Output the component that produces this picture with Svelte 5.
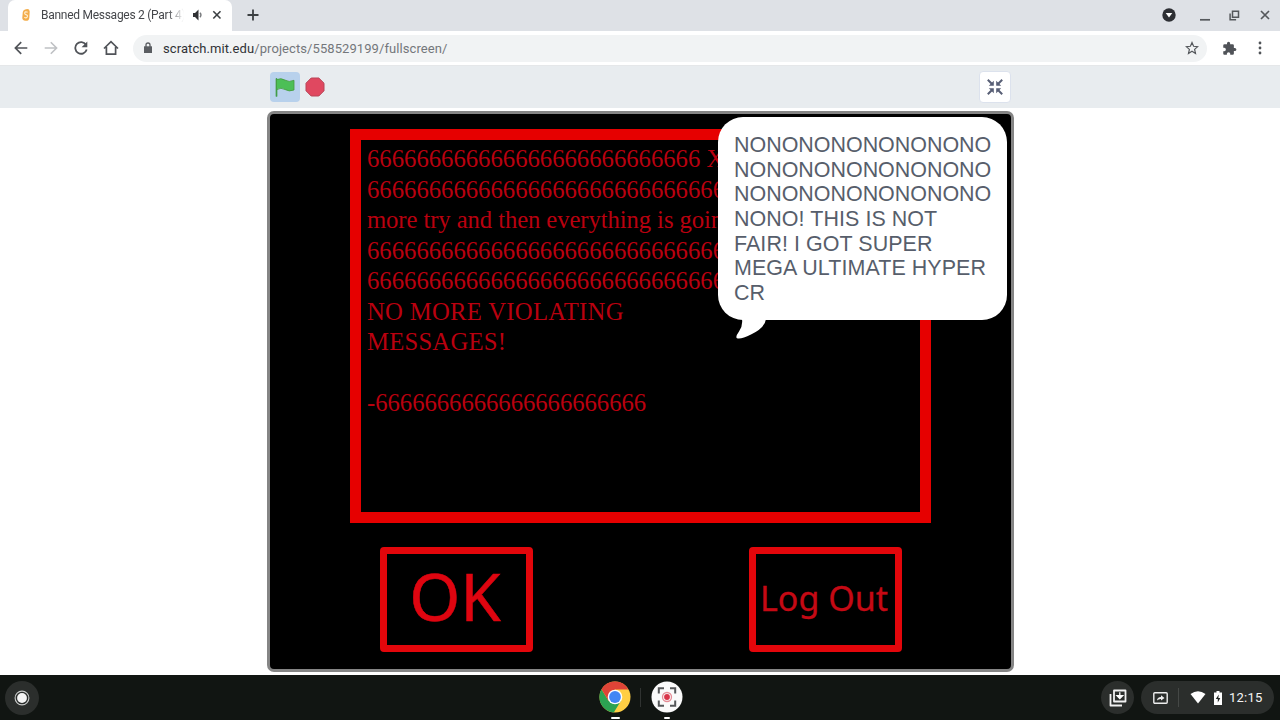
<script>
  const message = [
    { text: '6'.repeat(27) + ' X', spacing: 0 },
    { text: '6'.repeat(29), spacing: 0 },
    { text: 'more try and then everything is goin', spacing: -0.09 },
    { text: '6'.repeat(29), spacing: 0 },
    { text: '6'.repeat(29), spacing: 0 },
    { text: 'NO MORE VIOLATING', spacing: 0.29 },
    { text: 'MESSAGES!', spacing: 0.22 },
    { text: '', spacing: 0 },
    { text: '-' + '6'.repeat(22), spacing: -0.03 }
  ];
  const speech = [
    { text: 'NO'.repeat(8), spacing: 0 },
    { text: 'NO'.repeat(8), spacing: 0 },
    { text: 'NO'.repeat(8), spacing: 0 },
    { text: 'NONO! THIS IS NOT', spacing: 0.07 },
    { text: 'FAIR! I GOT SUPER', spacing: 0.07 },
    { text: 'MEGA ULTIMATE HYPER', spacing: 0.08 },
    { text: 'CR', spacing: 0 }
  ];
</script>

<div class="screen">
  <header class="tabs">
    <div class="tab">
      <svg class="favicon" width="10" height="14" viewBox="0 0 10 14">
        <path d="M4 1.5Q8.5 0 8.7 3.5L8.3 10Q7.8 13.2 4.5 12.8 1 12.3 1.3 9.4L1.8 4Q2.1 2 4 1.5Z" fill="#f3ad4b" />
        <path d="M6.7 4.3Q4 3 3.7 5.2 3.8 6.6 5.4 6.8 7 7.5 6.1 9.1 4.8 10.6 3.4 9.1" fill="none" stroke="#fff0d4" stroke-width="1.2" />
      </svg>
      <span class="title">Banned Messages 2 (Part 4)</span>
      <svg class="sound" width="12" height="12" viewBox="0 0 12 12">
        <path d="M1 4h2l3.5-3.5v11L3 8H1Z" fill="#303134" />
        <path d="M8 3.8Q10 6 8 8.2" fill="none" stroke="#77797c" stroke-width="1.3" />
      </svg>
      <svg class="close" width="10" height="10" viewBox="0 0 10 10"><path d="M1.3 1.3l7.2 7.2M8.5 1.3L1.3 8.5" stroke="#3c4043" stroke-width="1.6" /></svg>
    </div>
    <svg class="plus" width="12" height="12" viewBox="0 0 12 12"><path d="M6 .5v11M.5 6h11" stroke="#3c4043" stroke-width="1.8" /></svg>
    <div class="windows">
      <svg width="14" height="14" viewBox="0 0 14 14"><circle cx="7" cy="7" r="6.7" fill="#2d2f34" /><path d="M3.7 5h6.6L7 9.4Z" fill="#fff" /></svg>
      <svg class="minimize" width="10" height="14" viewBox="0 0 10 14"><path d="M0 11.8h10" stroke="#55585c" stroke-width="1.7" /></svg>
      <svg class="restore" width="11" height="11" viewBox="0 0 11 11"><path d="M3.5 1.2h6v6h-6ZM1.1 3.4v6.3h6" fill="none" stroke="#55585c" stroke-width="1.5" /></svg>
      <svg width="10" height="10" viewBox="0 0 10 10"><path d="M1 1l8 8M9 1L1 9" stroke="#55585c" stroke-width="1.7" /></svg>
    </div>
  </header>

  <nav class="toolbar">
    <svg width="14" height="14" viewBox="0 0 14 14"><path d="M13.3 7H1.8M7.2 1.2L1.4 7l5.8 5.8" fill="none" stroke="#505358" stroke-width="1.7" /></svg>
    <svg width="14" height="14" viewBox="0 0 14 14"><path d="M.7 7h11.5M6.8 1.2L12.6 7l-5.8 5.8" fill="none" stroke="#bfc1c4" stroke-width="1.6" /></svg>
    <svg width="14" height="14" viewBox="0 0 14 14"><path d="M12 3.8A5.8 5.8 0 1 0 12.7 8.5" fill="none" stroke="#505358" stroke-width="1.8" /><path d="M13.3.5v5.7H7.6Z" fill="#505358" /></svg>
    <svg width="16" height="16" viewBox="0 0 16 16"><path d="M1 8.5L8 1.7 15 8.500M3.400 7v7.200h9.200V7" fill="none" stroke="#505358" stroke-width="1.700" /></svg>
    <div class="address">
      <svg width="8" height="12" viewBox="0 0 8 12"><path d="M0 4.300h8V11H0Z" fill="#5a5d61" /><path d="M2 5V3Q2 1 4 1t2 2v2" fill="none" stroke="#5a5d61" stroke-width="1.300" /></svg>
      <span class="url"><b>scratch.mit.edu</b>/projects/558529199/fullscreen/</span>
      <svg class="star" width="14" height="14" viewBox="0 0 14 14"><path d="M7 1.600L8.600 5.300l4.100.400-3.100 2.700.900 4L7 10.300l-3.500 2.100.900-4L1.300 5.700l4.100-.400Z" fill="none" stroke="#55585c" stroke-width="1.200" /></svg>
    </div>
    <svg class="puzzle" width="15" height="15" viewBox="0 0 24 24"><path d="M20.500 11H19V7a2 2 0 0 0-2-2h-4V3.500a2.500 2.500 0 0 0-5 0V5H4a2 2 0 0 0-2 2v3.800h1.500a2.700 2.700 0 0 1 0 5.400H2V20c0 1.100.9 2 2 2h3.800v-1.500a2.700 2.700 0 0 1 5.400 0V22H17a2 2 0 0 0 2-2v-4h1.500a2.500 2.500 0 0 0 0-5Z" fill="#505358" /></svg>
    <svg class="dots" width="4" height="14" viewBox="0 0 4 14"><g fill="#505358"><circle cx="2" cy="2" r="1.4" /><circle cx="2" cy="7" r="1.4" /><circle cx="2" cy="12" r="1.4" /></g></svg>
  </nav>

  <section class="controls">
    <div class="flag">
      <svg width="22" height="22" viewBox="0 0 22 22"><path d="M2.5 2.9v17" stroke="#419c49" stroke-width="1.7" stroke-linecap="round" /><path d="M2.5 3.7Q7 1.5 11 4.1T20 4.3V14Q15 16 11 13.5T2.5 13.7Z" fill="#4cbf56" stroke="#45993d" stroke-width=".8" /></svg>
    </div>
    <svg class="stop" width="20" height="20" viewBox="0 0 20 20"><path d="M6.2 1h7.600L19 6.200v7.600L13.800 19H6.200L1 13.800V6.200Z" fill="#e04860" stroke="#b84456" /></svg>
    <div class="shrink">
      <svg width="16" height="16" viewBox="0 0 16 16"><path d="M.8.8L5 5M15.200.8L11 5M.8 15.200L5 11M15.200 15.200L11 11" stroke="#575e75" stroke-width="2" /><path d="M6.800 1.800v5H1.800ZM9.200 1.800v5h5ZM1.800 9.200h5v5ZM9.200 9.200h5L9.200 14.200Z" fill="#575e75" /></svg>
    </div>
  </section>

  <main>
    <div class="stage">
      <div class="dialog">
        {#each message as line}<div class="line" style="letter-spacing: {line.spacing}px">{line.text}</div>{/each}
      </div>
      <div class="buttons">
        <div class="button ok">OK</div>
        <div class="button logout">Log Out</div>
      </div>
      <div class="bubble">
        {#each speech as line}<div style="letter-spacing: {line.spacing}px">{line.text}</div>{/each}
        <svg width="34" height="22" viewBox="0 0 34 22"><path d="M6 0Q7 7 3 12.500Q-1 18 1 19.200Q5 20.500 15 15.500Q29 9 30 0Z" fill="#fff" /></svg>
      </div>
    </div>
  </main>

  <footer>
    <div class="launcher"><svg width="16" height="16" viewBox="0 0 16 16"><circle cx="8" cy="8" r="6.9" fill="none" stroke="#c9cbca" stroke-width="1.100" /><circle cx="8" cy="8" r="4.900" fill="#f5f5f5" /></svg></div>
    <div class="apps">
      <div class="app">
        <svg width="32" height="32" viewBox="0 0 32 32">
          <circle cx="16" cy="16" r="15.500" fill="#ffce44" />
          <path d="M16 16L9.500 19.700 2.500 8.200A15.500 15.500 0 0 0 14.800 31.500L22 19.700Z" fill="#2ca352" />
          <path d="M2.500 8.200A15.500 15.500 0 0 1 29.500 8.600H16L9.500 19.700Z" fill="#df4437" />
          <circle cx="16" cy="16" r="7.300" fill="#fff" /><circle cx="16" cy="16" r="5.900" fill="#4286f4" />
        </svg><i></i>
      </div>
      <span class="separator"></span>
      <div class="app capture">
        <svg width="32" height="32" viewBox="0 0 32 32">
          <circle cx="16" cy="16" r="15.500" fill="#fafafa" />
          <path d="M7.800 12.500V7.300H13M19 7.300h5.200v5.200M24.200 19.500v5.200H19M13 24.700H7.800v-5.200" fill="none" stroke="#555759" stroke-width="2" />
          <circle cx="16" cy="16" r="4.500" fill="none" stroke="#e58b95" stroke-width="1.300" /><circle cx="16" cy="16" r="2.900" fill="#d93449" />
        </svg><i></i>
      </div>
    </div>
    <div class="tray">
      <div class="holding"><svg width="18" height="18" viewBox="0 0 18 18"><path d="M5 1.500h11.500v11H5ZM1.500 5v11.500H13" fill="none" stroke="#f1f1f1" stroke-width="1.800" stroke-linejoin="round" /><path d="M10.800 3.300v5M7.900 6.600l2.900 3 2.900-3Z" fill="#fff" stroke="#fff" stroke-width="1.300" /></svg></div>
      <div class="status">
        <svg width="15" height="12" viewBox="0 0 15 12"><rect x=".8" y=".8" width="13.400" height="10.400" rx="1" fill="none" stroke="#ededed" stroke-width="1.400" /><path d="M4 8.500Q4.200 5.300 8 5V3.200l3.500 2.900L8 8.500V6.900Q5.500 6.800 4 8.500Z" fill="#ededed" /></svg>
        <span></span>
        <svg class="wifi" width="16" height="13" viewBox="0 0 16 13"><path d="M.5 3Q8-2.500 15.500 3L8 12.500Z" fill="#fff" /></svg>
        <svg class="battery" width="8" height="14" viewBox="0 0 8 14"><path d="M2.500 0h3v1.500H8V14H0V1.500h2.500Z" fill="#fff" /><path d="M4.800 3.500L1.800 8h2v3.500L6.300 7h-2Z" fill="#222623" /></svg>
        <time>12:15</time>
      </div>
    </div>
  </footer>
</div>

<style>
  :global(body) { margin: 0; overflow: hidden; }
  .screen { width: 1280px; height: 720px; display: flex; flex-direction: column; background: #fff; font-family: Roboto, sans-serif; }
  svg { display: block; flex-shrink: 0; }
  .tabs { height: 31px; flex: none; background: #dee1e6; display: flex; align-items: center; padding: 0 0 1px 8px; box-sizing: border-box; }
  .tab { width: 224px; height: 31px; margin-bottom: -1px; display: flex; align-items: center; background: #fff; border-radius: 7px 7px 0 0; box-sizing: border-box; padding: 0 0 2px 13px; }
  .title { width: 145px; margin-left: 10px; white-space: nowrap; font-size: 12px; letter-spacing: -.270px; line-height: 18px; color: #45474b; mask-image: linear-gradient(90deg, #000 126px, transparent 143px); }
  .sound { margin-left: 6px; }
  .close { margin-left: 8px; }
  .plus { margin-left: 15px; }
  .windows { margin-left: auto; width: 108px; margin-right: 10px; display: flex; align-items: center; }
  .minimize { margin-left: 24px; }
  .restore { margin-left: 19px; }
  .windows svg:last-child { margin-left: auto; }
  .toolbar { height: 35px; flex: none; display: flex; align-items: center; padding: 0 18px 0 14px; gap: 16px; box-sizing: border-box; border-bottom: 1px solid #e5e7e9; }
  .toolbar > svg:nth-child(4) { margin-left: -1px; }
  .address { height: 27px; flex: 1; margin-left: -2px; border-radius: 14px; background: #f1f3f4; display: flex; align-items: center; padding: 0 8px 0 11px; box-sizing: border-box; }
  .url { font-size: 13px; letter-spacing: .080px; margin-left: 11px; color: #74777b; }
  .url b { font-weight: 400; color: #303236; }
  .star { margin-left: auto; }
  .puzzle { margin-left: -1px; }
  .dots { margin-left: 5px; }
  .controls { height: 42px; flex: none; background: #e8ecef; display: flex; align-items: center; padding: 0 269px 0 270px; box-sizing: border-box; }
  .flag { width: 30px; height: 30px; border-radius: 4px; background: #b8d1ec; display: grid; place-items: center; }
  .stop { margin-left: 5px; }
  .shrink { margin-left: auto; width: 32px; height: 32px; border-radius: 4px; background: #fff; border: 1px solid #dce2ed; box-sizing: border-box; display: grid; place-items: center; }
  main { height: 567px; flex: none; padding: 3px 0 0 267px; box-sizing: border-box; }
  .stage { position: relative; width: 747px; height: 561px; border: 3px solid #858585; border-radius: 7px; background: #000; box-sizing: border-box; padding: 15px 80px 0; display: flex; flex-direction: column; }
  .dialog { width: 581px; height: 394px; flex: none; border: 11px solid #e60000; box-sizing: border-box; padding: 4px 0 0 6px; overflow: hidden; font: 24.7px/30.5px "Liberation Serif", serif; color: #b9000f; white-space: pre; }
  .line { height: 30.5px; }
  .buttons { display: flex; justify-content: space-between; padding: 24px 29px 0 30px; }
  .button { width: 153px; height: 105px; border: 7px solid #e3060b; border-radius: 4px; box-sizing: border-box; display: flex; align-items: center; justify-content: center; white-space: nowrap; font-family: "Noto Sans", sans-serif; }
  .ok { font-size: 65.5px; line-height: 90px; color: #df0510; padding: 0 3px 7px 0; -webkit-text-stroke: .5px #df0510; }
  .logout { font-size: 34px; line-height: 46px; color: #c50914; padding: 0 3px 4px 0; -webkit-text-stroke: .3px #c50914; }
  .bubble { position: absolute; left: 448px; top: 3px; width: 289px; height: 203px; border-radius: 25px; background: #fff; box-sizing: border-box; padding: 16px 0 0 16px; font: 21.45px/24.65px "Liberation Sans", sans-serif; color: #575e6b; white-space: nowrap; }
  .bubble svg { position: absolute; left: 18px; top: 202px; }
  footer { height: 45px; flex: none; background: #111512; display: grid; grid-template-columns: 1fr auto 1fr; align-items: center; }
  .launcher { width: 34px; height: 34px; border-radius: 50%; background: #2b2e2c; margin-left: 5px; display: grid; place-items: center; }
  .apps { display: flex; align-items: center; height: 45px; padding-left: 2px; }
  .app { height: 45px; display: flex; flex-direction: column; align-items: center; justify-content: space-between; padding-top: 6px; box-sizing: border-box; }
  .app i { width: 9px; height: 2px; border-radius: 1px; background: #fff; margin-bottom: 1px; }
  .capture i { width: 6px; }
  .separator { width: 1px; height: 19px; background: #303331; margin: 0 10px 0 9px; }
  .tray { display: flex; justify-content: flex-end; gap: 7px; padding-right: 6px; }
  .holding { width: 33px; height: 33px; border-radius: 50%; background: #2b2e2c; display: grid; place-items: center; }
  .status { width: 133px; height: 33px; border-radius: 17px; background: #2b2e2c; box-sizing: border-box; padding-left: 12px; display: flex; align-items: center; }
  .status span { width: 1px; height: 19px; background: #454846; margin: 0 11px 0 10px; }
  .battery { margin-left: 8px; }
  time { margin-left: 7px; color: #f3f3f3; font-size: 13px; letter-spacing: .25px; }
</style>
